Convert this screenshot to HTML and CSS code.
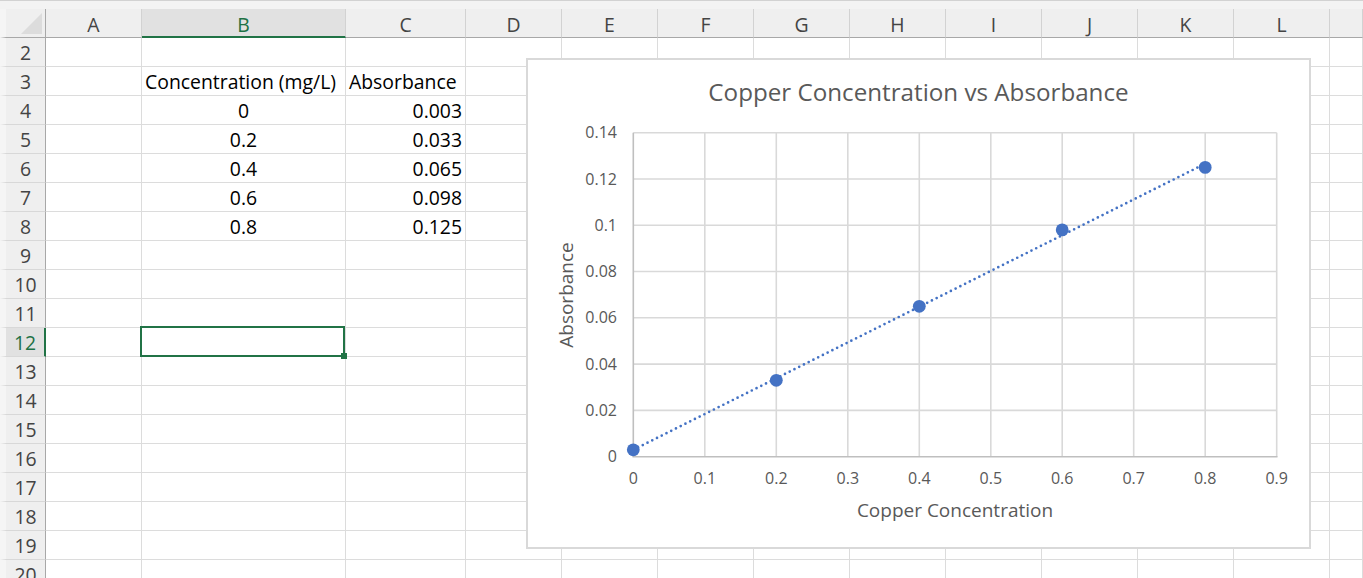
FILE: index.html
```html
<!DOCTYPE html>
<html lang="en">
<head>
<meta charset="utf-8">
<title>Copper Concentration vs Absorbance</title>
<link rel="stylesheet" href="styles.css">
</head>
<body>
<div class="app">
  <div class="band"></div>
  <div class="sheet">
    <div class="corner"><svg width="22" height="22" viewBox="0 0 22 22"><polygon points="21,0 21,21 0,21" fill="#dcdcdc"/></svg></div>
    <div class="ch">A</div><div class="ch sel">B</div><div class="ch">C</div><div class="ch">D</div><div class="ch">E</div><div class="ch">F</div><div class="ch">G</div><div class="ch">H</div><div class="ch">I</div><div class="ch">J</div><div class="ch">K</div><div class="ch">L</div><div class="ch"></div>

    <div class="rh">2</div><div class="c"></div><div class="c"></div><div class="c"></div><div class="c"></div><div class="c"></div><div class="c"></div><div class="c"></div><div class="c"></div><div class="c"></div><div class="c"></div><div class="c"></div><div class="c"></div><div class="c"></div>
    <div class="rh">3</div><div class="c"></div><div class="c l">Concentration (mg/L)</div><div class="c l">Absorbance</div><div class="c"></div><div class="c"></div><div class="c"></div><div class="c"></div><div class="c"></div><div class="c"></div><div class="c"></div><div class="c"></div><div class="c"></div><div class="c"></div>
    <div class="rh">4</div><div class="c"></div><div class="c m">0</div><div class="c r">0.003</div><div class="c"></div><div class="c"></div><div class="c"></div><div class="c"></div><div class="c"></div><div class="c"></div><div class="c"></div><div class="c"></div><div class="c"></div><div class="c"></div>
    <div class="rh">5</div><div class="c"></div><div class="c m">0.2</div><div class="c r">0.033</div><div class="c"></div><div class="c"></div><div class="c"></div><div class="c"></div><div class="c"></div><div class="c"></div><div class="c"></div><div class="c"></div><div class="c"></div><div class="c"></div>
    <div class="rh">6</div><div class="c"></div><div class="c m">0.4</div><div class="c r">0.065</div><div class="c"></div><div class="c"></div><div class="c"></div><div class="c"></div><div class="c"></div><div class="c"></div><div class="c"></div><div class="c"></div><div class="c"></div><div class="c"></div>
    <div class="rh">7</div><div class="c"></div><div class="c m">0.6</div><div class="c r">0.098</div><div class="c"></div><div class="c"></div><div class="c"></div><div class="c"></div><div class="c"></div><div class="c"></div><div class="c"></div><div class="c"></div><div class="c"></div><div class="c"></div>
    <div class="rh">8</div><div class="c"></div><div class="c m">0.8</div><div class="c r">0.125</div><div class="c"></div><div class="c"></div><div class="c"></div><div class="c"></div><div class="c"></div><div class="c"></div><div class="c"></div><div class="c"></div><div class="c"></div><div class="c"></div>
    <div class="rh">9</div><div class="c"></div><div class="c"></div><div class="c"></div><div class="c"></div><div class="c"></div><div class="c"></div><div class="c"></div><div class="c"></div><div class="c"></div><div class="c"></div><div class="c"></div><div class="c"></div><div class="c"></div>
    <div class="rh">10</div><div class="c"></div><div class="c"></div><div class="c"></div><div class="c"></div><div class="c"></div><div class="c"></div><div class="c"></div><div class="c"></div><div class="c"></div><div class="c"></div><div class="c"></div><div class="c"></div><div class="c"></div>
    <div class="rh">11</div><div class="c"></div><div class="c"></div><div class="c"></div><div class="c"></div><div class="c"></div><div class="c"></div><div class="c"></div><div class="c"></div><div class="c"></div><div class="c"></div><div class="c"></div><div class="c"></div><div class="c"></div>
    <div class="rh sel">12</div><div class="c"></div><div class="c active"></div><div class="c"></div><div class="c"></div><div class="c"></div><div class="c"></div><div class="c"></div><div class="c"></div><div class="c"></div><div class="c"></div><div class="c"></div><div class="c"></div><div class="c"></div>
    <div class="rh">13</div><div class="c"></div><div class="c"></div><div class="c"></div><div class="c"></div><div class="c"></div><div class="c"></div><div class="c"></div><div class="c"></div><div class="c"></div><div class="c"></div><div class="c"></div><div class="c"></div><div class="c"></div>
    <div class="rh">14</div><div class="c"></div><div class="c"></div><div class="c"></div><div class="c"></div><div class="c"></div><div class="c"></div><div class="c"></div><div class="c"></div><div class="c"></div><div class="c"></div><div class="c"></div><div class="c"></div><div class="c"></div>
    <div class="rh">15</div><div class="c"></div><div class="c"></div><div class="c"></div><div class="c"></div><div class="c"></div><div class="c"></div><div class="c"></div><div class="c"></div><div class="c"></div><div class="c"></div><div class="c"></div><div class="c"></div><div class="c"></div>
    <div class="rh">16</div><div class="c"></div><div class="c"></div><div class="c"></div><div class="c"></div><div class="c"></div><div class="c"></div><div class="c"></div><div class="c"></div><div class="c"></div><div class="c"></div><div class="c"></div><div class="c"></div><div class="c"></div>
    <div class="rh">17</div><div class="c"></div><div class="c"></div><div class="c"></div><div class="c"></div><div class="c"></div><div class="c"></div><div class="c"></div><div class="c"></div><div class="c"></div><div class="c"></div><div class="c"></div><div class="c"></div><div class="c"></div>
    <div class="rh">18</div><div class="c"></div><div class="c"></div><div class="c"></div><div class="c"></div><div class="c"></div><div class="c"></div><div class="c"></div><div class="c"></div><div class="c"></div><div class="c"></div><div class="c"></div><div class="c"></div><div class="c"></div>
    <div class="rh">19</div><div class="c"></div><div class="c"></div><div class="c"></div><div class="c"></div><div class="c"></div><div class="c"></div><div class="c"></div><div class="c"></div><div class="c"></div><div class="c"></div><div class="c"></div><div class="c"></div><div class="c"></div>
    <div class="rh">20</div><div class="c"></div><div class="c"></div><div class="c"></div><div class="c"></div><div class="c"></div><div class="c"></div><div class="c"></div><div class="c"></div><div class="c"></div><div class="c"></div><div class="c"></div><div class="c"></div><div class="c"></div>
  </div>

  <div class="chart">
    <svg viewBox="526 58 785 491" width="785" height="491">
      <text class="title" x="918.5" y="101" text-anchor="middle">Copper Concentration vs Absorbance</text>
      <g class="grid">
        <line x1="704.8" y1="132.7" x2="704.8" y2="456.7"/>
        <line x1="776.3" y1="132.7" x2="776.3" y2="456.7"/>
        <line x1="847.8" y1="132.7" x2="847.8" y2="456.7"/>
        <line x1="919.3" y1="132.7" x2="919.3" y2="456.7"/>
        <line x1="990.8" y1="132.7" x2="990.8" y2="456.7"/>
        <line x1="1062.2" y1="132.7" x2="1062.2" y2="456.7"/>
        <line x1="1133.7" y1="132.7" x2="1133.7" y2="456.7"/>
        <line x1="1205.2" y1="132.7" x2="1205.2" y2="456.7"/>
        <line x1="1276.7" y1="132.7" x2="1276.7" y2="456.7"/>
        <line x1="633.3" y1="132.7" x2="1276.7" y2="132.7"/>
        <line x1="633.3" y1="179.0" x2="1276.7" y2="179.0"/>
        <line x1="633.3" y1="225.3" x2="1276.7" y2="225.3"/>
        <line x1="633.3" y1="271.5" x2="1276.7" y2="271.5"/>
        <line x1="633.3" y1="317.8" x2="1276.7" y2="317.8"/>
        <line x1="633.3" y1="364.1" x2="1276.7" y2="364.1"/>
        <line x1="633.3" y1="410.4" x2="1276.7" y2="410.4"/>
      </g>
      <g class="axis">
        <line x1="633.3" y1="132.7" x2="633.3" y2="456.7"/>
        <line x1="632.5" y1="456.7" x2="1277.5" y2="456.7"/>
      </g>
      <g class="ylab" text-anchor="end">
        <text x="617" y="138.2">0.14</text>
        <text x="617" y="184.5">0.12</text>
        <text x="617" y="230.8">0.1</text>
        <text x="617" y="277">0.08</text>
        <text x="617" y="323.3">0.06</text>
        <text x="617" y="369.6">0.04</text>
        <text x="617" y="415.9">0.02</text>
        <text x="617" y="462.2">0</text>
      </g>
      <g class="xlab" text-anchor="middle">
        <text x="633.3" y="484.3">0</text>
        <text x="704.8" y="484.3">0.1</text>
        <text x="776.3" y="484.3">0.2</text>
        <text x="847.8" y="484.3">0.3</text>
        <text x="919.3" y="484.3">0.4</text>
        <text x="990.8" y="484.3">0.5</text>
        <text x="1062.2" y="484.3">0.6</text>
        <text x="1133.7" y="484.3">0.7</text>
        <text x="1205.2" y="484.3">0.8</text>
        <text x="1276.7" y="484.3">0.9</text>
      </g>
      <text class="atitle" x="955" y="516.5" text-anchor="middle">Copper Concentration</text>
      <text class="atitle" x="573.3" y="295" text-anchor="middle" transform="rotate(-90 573.3 295)">Absorbance</text>
      <line class="trend" x1="633.3" y1="449.8" x2="1205.2" y2="163.7"/>
      <g class="pts">
        <circle cx="633.3" cy="449.8" r="6.4"/>
        <circle cx="776.3" cy="380.3" r="6.4"/>
        <circle cx="919.3" cy="306.3" r="6.4"/>
        <circle cx="1062.2" cy="229.9" r="6.4"/>
        <circle cx="1205.2" cy="167.4" r="6.4"/>
      </g>
    </svg>
  </div>
</div>
</body>
</html>
```

FILE: styles.css
```css
html, body {
  margin: 0;
  padding: 0;
  background: #ffffff;
  overflow: hidden;
}

body {
  width: 1363px;
  height: 578px;
  font-family: "Open Sans", "Noto Sans", sans-serif;
}

.app {
  position: relative;
  width: 1363px;
  height: 578px;
  overflow: hidden;
}

.band {
  height: 9px;
  box-sizing: border-box;
  border-top: 1px solid #d2d2d2;
  background: #f3f3f3;
}

.sheet {
  display: grid;
  grid-template-columns: 46px 96px 204px 120px repeat(9, 96px) 1fr;
  grid-auto-rows: 29px;
  font-size: 19.4px;
  color: #000;
}

.sheet > div {
  box-sizing: border-box;
  white-space: nowrap;
  min-width: 0;
}

.corner {
  background: #efefef;
  border-left: 6px solid #f5f5f5;
  border-right: 1px solid #a8a8a8;
  border-bottom: 1px solid #a8a8a8;
  display: flex;
  align-items: flex-end;
  justify-content: flex-end;
  padding: 0 2px 2px 0;
}

.corner svg {
  display: block;
}

.ch {
  background: #efefef;
  color: #444444;
  text-align: center;
  padding-top: 2px;
  line-height: 27px;
  border-right: 1px solid #d2d2d2;
  border-bottom: 1px solid #a8a8a8;
}

.ch.sel {
  background: #e1e1e1;
  color: #1e7145;
  border-bottom: 2px solid #217346;
}

.rh {
  background: #efefef;
  color: #444444;
  text-align: center;
  padding-top: 1px;
  line-height: 28px;
  border-left: 6px solid #f5f5f5;
  border-right: 1px solid #a8a8a8;
  border-bottom: 1px solid #d8d8d8;
}

.rh.sel {
  background: #e1e1e1;
  color: #1e7145;
  border-right: 2px solid #217346;
}

.c {
  border-right: 1px solid #dcdcdc;
  border-bottom: 1px solid #dcdcdc;
  padding-top: 1px;
  line-height: 28px;
}

.c.l {
  text-align: left;
  padding-left: 3px;
}

.c.m {
  text-align: center;
}

.c.r {
  text-align: right;
  padding-right: 3px;
}

.c.active {
  position: relative;
}

.c.active::after {
  content: "";
  position: absolute;
  top: -2px;
  left: -2px;
  right: 0;
  bottom: -1px;
  border: 2px solid #217346;
}

.c.active::before {
  content: "";
  position: absolute;
  width: 6px;
  height: 6px;
  right: -2px;
  bottom: -3px;
  background: #217346;
  z-index: 1;
}

.chart {
  position: absolute;
  left: 526px;
  top: 58px;
  width: 785px;
  height: 491px;
  box-sizing: border-box;
  border: 2px solid #d9d9d9;
  background: #ffffff;
}

.chart svg {
  position: absolute;
  left: -2px;
  top: -2px;
  display: block;
  overflow: visible;
  font-family: "Open Sans", "Noto Sans", sans-serif;
}

.chart .title {
  font-size: 24.2px;
  fill: #595959;
}

.chart .grid line {
  stroke: #d9d9d9;
  stroke-width: 1.6;
}

.chart .axis line {
  stroke: #bfbfbf;
  stroke-width: 1.6;
}

.chart .ylab text,
.chart .xlab text {
  font-size: 16px;
  fill: #595959;
}

.chart .atitle {
  font-size: 19px;
  fill: #595959;
}

.chart .trend {
  stroke: #4472c4;
  stroke-width: 2.7;
  stroke-linecap: round;
  stroke-dasharray: 0 5.3;
}

.chart .pts circle {
  fill: #4472c4;
}
```
